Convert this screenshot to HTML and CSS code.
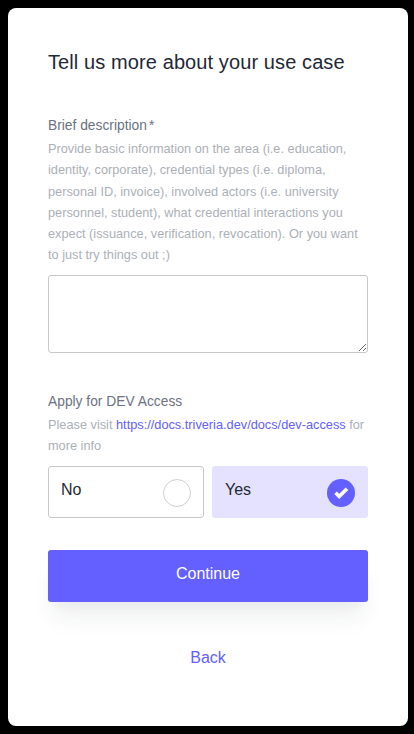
FILE: index.html
```html
<!DOCTYPE html>
<html lang="en">

<head>
  <meta charset="UTF-8" />
  <meta name="viewport" content="width=device-width, initial-scale=1.0" />
  <title>Tell us more about your use case</title>
  <link rel="stylesheet" href="styles.css">
</head>

<body>
  <div class="card">
    <h1>Tell us more about your use case</h1>

    <div class="field">
      <label class="label" for="description">Brief description<span class="required">*</span></label>
      <p class="hint">Provide basic information on the area (i.e. education, identity, corporate), credential types (i.e. diploma, personal ID, invoice), involved actors (i.e. university personnel, student), what credential interactions you expect (issuance, verification, revocation). Or you want to just try things out ;)</p>
      <textarea id="description" class="textarea"></textarea>
    </div>

    <div class="field-access">
      <div class="label">Apply for DEV Access</div>
      <p class="hint">Please visit <a href="#">https://docs.triveria.dev/docs/dev-access</a> for more info</p>
      <div class="options">
        <div class="option">
          <span>No</span>
          <span class="radio"></span>
        </div>
        <div class="option option-selected">
          <span>Yes</span>
          <svg class="radio-checked" viewBox="0 0 28 28" width="28" height="28">
            <circle cx="14" cy="14" r="14" fill="#6360ff" />
            <path d="M8.6 13.8l3.6 3.6 7.8-7.6" fill="none" stroke="#fff" stroke-width="3.6" />
          </svg>
        </div>
      </div>
    </div>

    <button class="btn">Continue</button>
    <a class="back" href="#">Back</a>
  </div>
</body>

</html>
```

FILE: styles.css
```css
* {
  box-sizing: border-box;
}

body {
  margin: 0;
  height: 734px;
  padding: 8px 6px 8px 8px;
  background: #000;
  font-family: "Liberation Sans", Arial, sans-serif;
}

.card {
  height: 718px;
  padding: 40px;
  background: #fff;
  border-radius: 8px;
}

h1 {
  margin: 0;
  font-size: 20px;
  font-weight: 400;
  line-height: 28px;
  letter-spacing: 0.1px;
  color: #1f2937;
}

.field {
  margin-top: 40px;
}

.field-access {
  margin-top: 39px;
}

.label {
  display: block;
  font-size: 13.8px;
  line-height: 20px;
  color: #6b7280;
}

.required {
  margin-left: 2px;
}

.hint {
  margin: 2px 0 0;
  font-size: 12.75px;
  line-height: 21.3px;
  color: #abb0b7;
}

.hint a {
  color: #6360ff;
  text-decoration: none;
}

.textarea {
  display: block;
  width: 100%;
  height: 78px;
  margin-top: 9.2px;
  border: 1px solid #c8c8c8;
  border-radius: 3px;
  background: #fff;
}

.options {
  display: flex;
  gap: 8px;
  margin-top: 9.4px;
}

.option {
  flex: 1;
  display: flex;
  justify-content: space-between;
  height: 52px;
  padding: 12px;
  border: 1px solid #c8c8c8;
  border-radius: 3px;
  font-size: 16px;
  line-height: 22px;
  color: #1f2937;
}

.option-selected {
  border-color: #e4e2ff;
  background: #e4e2ff;
}

.radio,
.radio-checked {
  flex: none;
  width: 28px;
  height: 28px;
}

.radio {
  border: 1px solid #d0d0d0;
  border-radius: 50%;
}

.btn {
  display: block;
  width: 100%;
  height: 52px;
  margin-top: 32px;
  padding: 0 0 4px;
  border: none;
  border-radius: 3px;
  background: #6360ff;
  box-shadow: 0 20px 25px -5px rgba(31, 41, 55, 0.07), 0 10px 10px -5px rgba(31, 41, 55, 0.03);
  font-family: inherit;
  font-size: 16px;
  color: #fff;
}

.back {
  display: block;
  margin-top: 44px;
  font-size: 16px;
  line-height: 24px;
  text-align: center;
  color: #6360ff;
  text-decoration: none;
}
```
